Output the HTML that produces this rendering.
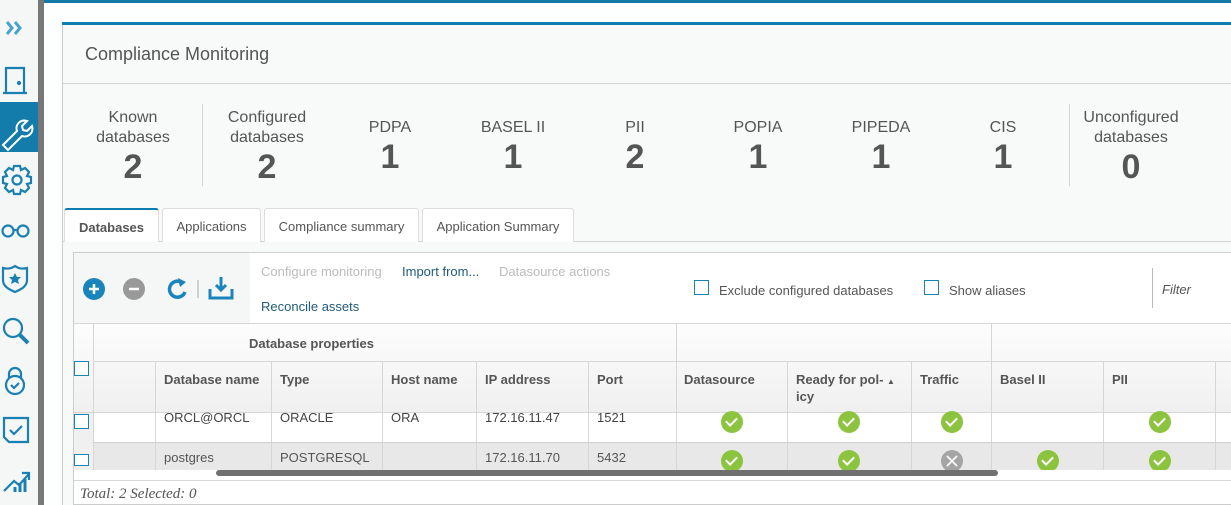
<!DOCTYPE html>
<html><head><meta charset="utf-8"><style>
*{box-sizing:border-box;margin:0;padding:0}
body{width:1231px;height:505px;overflow:hidden;background:#fdfefe;font-family:"Liberation Sans",sans-serif;color:#555;position:relative}
.a{position:absolute}
.side{left:0;top:0;width:38px;height:505px;background:#f5f7f7}
.gbar{left:38px;top:0;width:6px;height:505px;background:#777}
.stat{position:absolute;text-align:center;font-size:16px;line-height:20px;color:#555;transform:translateX(-50%);white-space:nowrap}
.stat b{display:block;font-size:34px;line-height:38px;font-weight:bold;color:#555}
.tab{position:absolute;top:208px;height:34px;background:#fff;border:1px solid #ddd;border-bottom:none;border-radius:3px 3px 0 0;font-size:13px;color:#555;text-align:center;line-height:36px}
.hl{position:absolute;background:#d6d6d6}
.th{position:absolute;font-size:13px;font-weight:bold;color:#555}
.td{position:absolute;font-size:13px;color:#444}
.cb{position:absolute;width:15px;height:15px;border:1.5px solid #1a82b4;background:#fff}
.ok{position:absolute;width:22px;height:22px;border-radius:50%;background:#8cc43f}
.ok:after{content:"";position:absolute;left:7px;top:4px;width:5px;height:9px;border:solid #fff;border-width:0 2px 2px 0;transform:rotate(45deg)}
.no{background:#a5a5a5}
.no:after{display:none}
</style></head><body>
<div class="a" style="left:40px;top:0;width:1191px;height:3px;background:#137aa8"></div>
<div class="a side"></div>
<div class="a gbar"></div>
<div class="a" style="left:0;top:102px;width:38px;height:50px;background:#137cab"></div>
<svg class="a" style="left:0;top:0" width="38" height="505" fill="none" stroke="#1a80b2" stroke-width="2.2">
<path d="M7 22l5 6-5 6M15 22l5 6-5 6" stroke="#4aa2cc" stroke-width="3"/>
<path d="M3 93h24M6 93V68h18v25" /><circle cx="19" cy="83" r="1" fill="#1a80b2"/>
<path d="M3 145l14-14c-2-6 3-12 10-10l-5 5 1 4 4 1 5-5c2 7-4 12-10 10L8 150z" stroke="#fff" stroke-width="2"/>
<path d="M14 166h6l1 4 4-2 4 4-2 4 4 1v6l-4 1 2 4-4 4-4-2-1 4h-6l-1-4-4 2-4-4 2-4-4-1v-6l4-1-2-4 4-4 4 2z"/><circle cx="17" cy="180" r="4.5"/>
<circle cx="8" cy="231" r="5.5"/><circle cx="23" cy="231" r="5.5"/><path d="M13 230h5"/>
<path d="M15 266c4 3 8 3 12 2v12c0 6-5 9-12 12-7-3-12-6-12-12v-12c4 1 8 1 12-2z"/><path d="M15 273l2 4h4l-3 3 1 4-4-2-4 2 1-4-3-3h4z" fill="#1a80b2" stroke="none"/>
<circle cx="13" cy="328" r="9"/><path d="M20 335l8 8" stroke-width="4"/>
<path d="M9 378v-4a6 6 0 0112 0v4"/><circle cx="15" cy="385" r="9"/><path d="M11 385l3 3 5-5"/>
<path d="M4 418h24v24H9l-5-5z"/><path d="M10 430l4 4 8-8"/>
<path d="M4 491l10-10 5 4 10-11M22 473h7v7"/><path d="M15 492v-5M20 492v-9M25 492v-13" stroke-width="3"/>
</svg>
<div class="a" style="left:62px;top:22px;width:1169px;height:483px;background:#f8f9f9;border-left:1.5px solid #ccc"></div>
<div class="a" style="left:62px;top:22px;width:1169px;height:3px;background:#0f7cb0"></div>
<div class="a" style="left:85px;top:44px;font-size:18px;color:#555">Compliance Monitoring</div>
<div class="a" style="left:63px;top:83px;width:1168px;height:1px;background:#d4d4d4"></div>
<div class="a" style="left:202px;top:104px;width:1px;height:82px;background:#d6d6d6"></div>
<div class="a" style="left:1069px;top:104px;width:1px;height:82px;background:#d6d6d6"></div>
<div class="stat" style="left:133px;top:108px">Known<br>databases<b>2</b></div>
<div class="stat" style="left:267px;top:108px">Configured<br>databases<b>2</b></div>
<div class="stat" style="left:390px;top:118px">PDPA<b>1</b></div>
<div class="stat" style="left:513px;top:118px">BASEL II<b>1</b></div>
<div class="stat" style="left:635px;top:118px">PII<b>2</b></div>
<div class="stat" style="left:758px;top:118px">POPIA<b>1</b></div>
<div class="stat" style="left:881px;top:118px">PIPEDA<b>1</b></div>
<div class="stat" style="left:1003px;top:118px">CIS<b>1</b></div>
<div class="stat" style="left:1131px;top:108px">Unconfigured<br>databases<b>0</b></div>
<div class="a" style="left:63px;top:241px;width:1168px;height:1px;background:#d4d4d4"></div>
<div class="tab" style="left:64px;width:95px;border-top:2px solid #0f7cb0;font-weight:bold">Databases</div>
<div class="tab" style="left:162px;width:99px">Applications</div>
<div class="tab" style="left:264px;width:155px">Compliance summary</div>
<div class="tab" style="left:422px;width:152px">Application Summary</div>
<div class="a" style="left:73px;top:252px;width:1158px;height:253px;background:#fff;border:1px solid #ccc;border-right:none"></div>
<div class="a" style="left:74px;top:253px;width:176px;height:70px;background:#f5f7f7"></div>
<svg class="a" style="left:80px;top:275px" width="160" height="28">
<circle cx="14" cy="14" r="11" fill="#1a84bd"/><path d="M9 14h10M14 9v10" stroke="#fff" stroke-width="2.5"/>
<circle cx="54" cy="14" r="11" fill="#999"/><path d="M49 14h10" stroke="#fff" stroke-width="2.5"/>
<path d="M101 7a8 8 0 1 0 4 10" fill="none" stroke="#1a84bd" stroke-width="3.5"/><path d="M98 3l8 4-6 5z" fill="#1a84bd"/>
<path d="M118 5v18" stroke="#aaa"/>
<path d="M130 14v9h22v-9" fill="none" stroke="#1a84bd" stroke-width="3"/><path d="M141 2v13M136 10l5 5 5-5" fill="none" stroke="#1a84bd" stroke-width="3"/>
</svg>
<div class="a" style="left:261px;top:264px;font-size:13px;color:#bbb">Configure monitoring</div>
<div class="a" style="left:402px;top:264px;font-size:13px;color:#1f5a7a">Import from...</div>
<div class="a" style="left:499px;top:264px;font-size:13px;color:#bbb">Datasource actions</div>
<div class="a" style="left:261px;top:299px;font-size:13px;color:#1f5a7a">Reconcile assets</div>
<div class="cb" style="left:694px;top:280px"></div>
<div class="a" style="left:719px;top:283px;font-size:13px;color:#555">Exclude configured databases</div>
<div class="cb" style="left:924px;top:280px"></div>
<div class="a" style="left:949px;top:283px;font-size:13px;color:#555">Show aliases</div>
<div class="a" style="left:1152px;top:268px;width:1px;height:40px;background:#bbb"></div>
<div class="a" style="left:1162px;top:282px;font-size:13px;font-style:italic;color:#555">Filter</div>
<div class="a" style="left:74px;top:324px;width:1157px;height:88px;background:linear-gradient(#fdfdfd,#f0f0f0)"></div>
<div class="hl" style="left:74px;top:323px;width:1157px;height:1px"></div>
<div class="hl" style="left:93px;top:361px;width:1138px;height:1px"></div>
<div class="hl" style="left:74px;top:412px;width:1157px;height:1px"></div>
<div class="a" style="left:74px;top:442px;width:1157px;height:28px;background:#e8e8e8;border-top:1px solid #d0d0d0"></div>
<div class="a" style="left:74px;top:413px;width:19px;height:57px;background:#f0f0f0"></div>
<div class="hl" style="left:93px;top:324px;width:1px;height:146px"></div>
<div class="hl" style="left:676px;top:324px;width:1px;height:146px"></div>
<div class="hl" style="left:991px;top:324px;width:1px;height:146px"></div>
<div class="hl" style="left:155px;top:361px;width:1px;height:109px"></div>
<div class="hl" style="left:271px;top:361px;width:1px;height:109px"></div>
<div class="hl" style="left:382px;top:361px;width:1px;height:109px"></div>
<div class="hl" style="left:476px;top:361px;width:1px;height:109px"></div>
<div class="hl" style="left:588px;top:361px;width:1px;height:109px"></div>
<div class="hl" style="left:787px;top:361px;width:1px;height:109px"></div>
<div class="hl" style="left:911px;top:361px;width:1px;height:109px"></div>
<div class="hl" style="left:1103px;top:361px;width:1px;height:109px"></div>
<div class="hl" style="left:1215px;top:361px;width:1px;height:109px"></div>
<div class="th" style="left:249px;top:336px">Database properties</div>
<div class="th" style="left:164px;top:372px">Database name</div>
<div class="th" style="left:280px;top:372px">Type</div>
<div class="th" style="left:391px;top:372px">Host name</div>
<div class="th" style="left:485px;top:372px">IP address</div>
<div class="th" style="left:597px;top:372px">Port</div>
<div class="th" style="left:684px;top:372px">Datasource</div>
<div class="th" style="left:796px;top:372px;line-height:15px">Ready for pol- <span style="font-size:8px">▲</span><br>icy</div>
<div class="th" style="left:920px;top:372px">Traffic</div>
<div class="th" style="left:1000px;top:372px">Basel II</div>
<div class="th" style="left:1112px;top:372px">PII</div>
<div class="cb" style="left:74px;top:361px"></div>
<div class="cb" style="left:74px;top:414px"></div>
<div class="cb" style="left:74px;top:454px;height:12px"></div>
<div class="td" style="left:164px;top:410px">ORCL@ORCL</div>
<div class="td" style="left:280px;top:410px">ORACLE</div>
<div class="td" style="left:391px;top:410px">ORA</div>
<div class="td" style="left:485px;top:410px">172.16.11.47</div>
<div class="td" style="left:597px;top:410px">1521</div>
<div class="td" style="left:164px;top:450px;color:#555">postgres</div>
<div class="td" style="left:280px;top:450px;color:#555">POSTGRESQL</div>
<div class="td" style="left:485px;top:450px;color:#555">172.16.11.70</div>
<div class="td" style="left:597px;top:450px;color:#555">5432</div>
<div class="ok" style="left:721px;top:411px"></div>
<div class="ok" style="left:838px;top:411px"></div>
<div class="ok" style="left:941px;top:411px"></div>
<div class="ok" style="left:1149px;top:411px"></div>
<div class="a" style="left:74px;top:470px;width:1157px;height:10px;background:#fff"></div>
<div style="position:absolute;left:74px;top:449px;width:1157px;height:21px;overflow:hidden">
<div class="ok" style="left:647px;top:1px"></div>
<div class="ok" style="left:764px;top:1px"></div>
<div class="ok no" style="left:867px;top:1px"><svg width="22" height="22" style="position:absolute;left:0;top:0"><path d="M6 6l10 10M16 6L6 16" stroke="#fff" stroke-width="1.6"/></svg></div>
<div class="ok" style="left:963px;top:1px"></div>
<div class="ok" style="left:1075px;top:1px"></div>
</div>
<div class="a" style="left:216px;top:470px;width:782px;height:6px;border-radius:3px;background:#707070"></div>
<div class="hl" style="left:74px;top:480px;width:1157px;height:1px"></div>
<div class="a" style="left:80px;top:486px;font-family:'Liberation Serif',serif;font-style:italic;font-size:15px;color:#555">Total: 2 Selected: 0</div>
</body></html>
